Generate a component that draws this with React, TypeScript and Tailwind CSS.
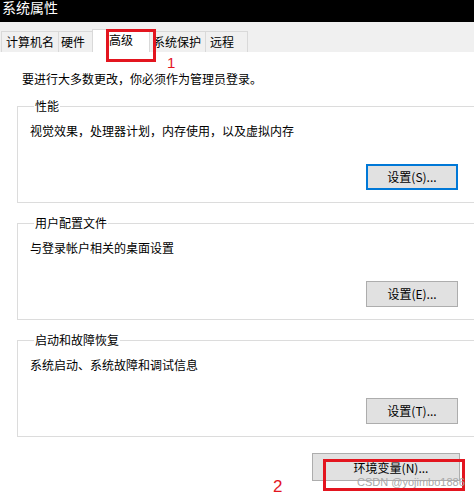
import React from "react";

const Btn = ({ label, focused }: { label: string; focused?: boolean }) => (
  <div
    className={`flex items-center justify-center h-[26px] w-[92px] bg-[#e1e1e1] ${
      focused ? "border-2 border-[#0078d7]" : "border border-[#adadad]"
    }`}
  >
    {label}
  </div>
);

const Group = ({ title, desc, btn, focused }: { title: string; desc: string; btn: string; focused?: boolean }) => (
  <fieldset className="mt-[13px] ml-[17px] w-[460px] min-w-0 border border-[#dcdcdc] pl-[12px] pb-[12px]">
    <legend className="ml-[4px] px-[1px] leading-[14px]">{title}</legend>
    <div className="mt-[11px] leading-[14px]">{desc}</div>
    <div className="mt-[26px] ml-[336px]">
      <Btn label={btn} focused={focused} />
    </div>
  </fieldset>
);

export default function App() {
  return (
    <div className="relative w-[474px] h-[495px] overflow-hidden bg-white text-black text-[12px] leading-[14px] font-['Microsoft_YaHei','Noto_Sans_CJK_SC',sans-serif]">
      <div className="h-[22px] bg-black text-white text-[14px] leading-[15px] pl-[2px]">系统属性</div>
      <div className="flex h-[473px]">
        <div className="w-[3px] bg-[#dbe5f1]" />
        <div className="flex-1 flex flex-col">
          <div className="h-[30px] bg-[#f0f0f0] flex items-end pl-[1px]">
            <div className="w-[58px] h-[21px] border-t border-l border-r border-[#d9d9d9] pl-[4px] pt-[3px]">计算机名</div>
            <div className="-ml-px w-[35px] h-[21px] border-t border-r border-[#d9d9d9] pl-[3px] pt-[3px]">硬件</div>
            <div className="-ml-px w-[58px] h-[23px] bg-white border-t border-l border-r border-[#d9d9d9] pl-[16px] pt-[3px]">高级</div>
            <div className="-ml-px w-[57px] h-[21px] border-t border-r border-[#d9d9d9] pl-[4px] pt-[3px]">系统保护</div>
            <div className="-ml-px w-[43px] h-[21px] border-t border-r border-[#d9d9d9] pl-[5px] pt-[3px]">远程</div>
          </div>
          <div className="flex-1 bg-white flex flex-col">
            <div className="mt-[20px] pl-[22px]">要进行大多数更改，你必须作为管理员登录。</div>
            <Group title="性能" desc="视觉效果，处理器计划，内存使用，以及虚拟内存" btn="设置(S)..." focused />
            <Group title="用户配置文件" desc="与登录帐户相关的桌面设置" btn="设置(E)..." />
            <Group title="启动和故障恢复" desc="系统启动、系统故障和调试信息" btn="设置(T)..." />
            <div className="mt-[16px] ml-[312px] w-[148px] h-[28px] bg-[#e1e1e1] border border-[#adadad] flex items-start justify-center pt-[7px] pl-[10px]">
              环境变量(N)...
            </div>
          </div>
        </div>
      </div>

      {/* annotations */}
      <div className="absolute left-[106px] top-[29px] w-[50px] h-[33px] border-[3px] border-[#e3151f]" />
      <div className="absolute left-[167px] top-[55px] text-[15px] leading-[16px] text-[#e3151f] font-['Liberation_Sans',sans-serif]">1</div>
      <div className="absolute left-[323px] top-[459px] w-[142px] h-[32px] border-[3px] border-[#e3151f]" />
      <div className="absolute left-[273px] top-[478px] text-[17px] leading-[18px] text-[#e3151f] font-['Liberation_Sans',sans-serif]">2</div>
      <div className="absolute left-[357px] top-[476px] text-[11px] leading-[12px] text-[#a8a8a8] font-['Liberation_Sans',sans-serif]">CSDN @yojimbo1886</div>
    </div>
  );
}
